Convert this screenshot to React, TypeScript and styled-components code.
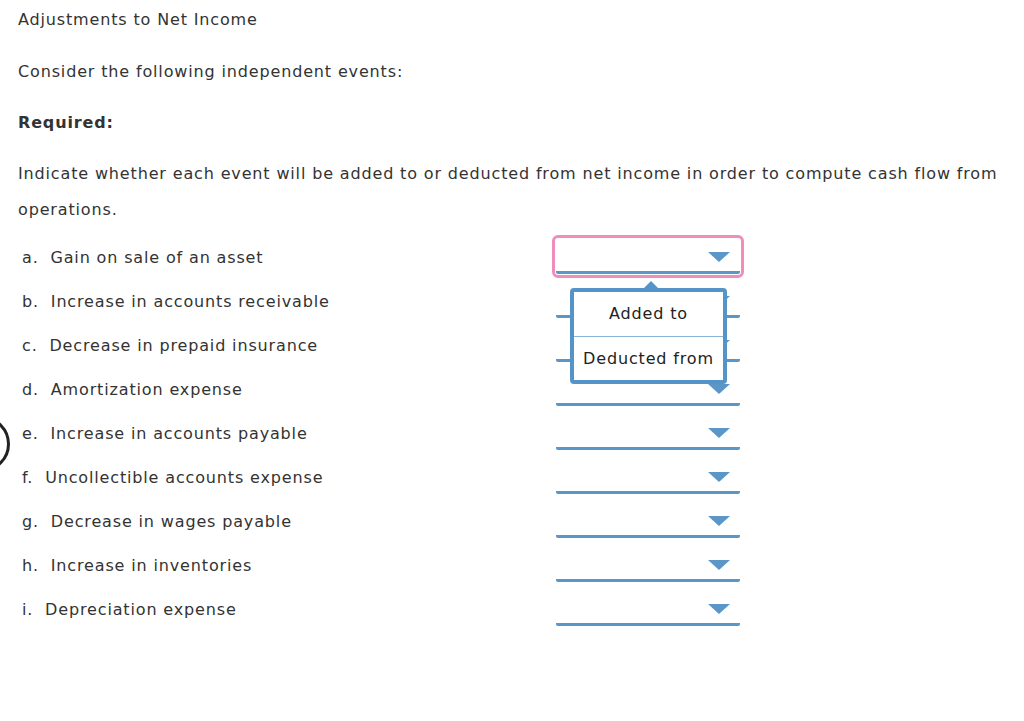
import styled, { createGlobalStyle } from "styled-components"

const GlobalStyle = createGlobalStyle`
  body {
    margin: 0;
    background: #fff;
    color: #333;
    font-family: Verdana, "DejaVu Sans", sans-serif;
    font-size: 16px;
    letter-spacing: 0.85px;
  }
`

const blue = "#5a96c7"

const Page = styled.div`
  position: relative;
  width: 1024px;
  height: 721px;
  padding: 2px 18px 0;
  box-sizing: border-box;
  overflow: hidden;
`

const Para = styled.p<{ $gap?: number; $bold?: boolean }>`
  margin: ${(p) => p.$gap ?? 0}px 0 0;
  line-height: 36px;
  font-weight: ${(p) => (p.$bold ? "bold" : "normal")};
  white-space: nowrap;
`

const List = styled.div`
  margin-top: 8px;
  display: flex;
  flex-direction: column;
`

const Row = styled.div`
  height: 44px;
  display: flex;
  align-items: flex-start;
`

const Label = styled.div`
  width: 538px;
  box-sizing: border-box;
  padding-left: 4px;
  line-height: 44px;
  white-space: pre;
`

const Select = styled.div<{ $focused?: boolean }>`
  position: relative;
  width: 174px;
  height: 32px;
  margin-top: 3px;
  padding-right: 10px;
  border-bottom: 3px solid ${blue};
  display: flex;
  align-items: center;
  justify-content: flex-end;
  outline: ${(p) => (p.$focused ? "3px solid #f18dbb" : "none")};
  outline-offset: 1px;
  border-radius: 2px;
`

const Caret = styled.div`
  width: 0;
  height: 0;
  margin-top: 3px;
  border-left: 11px solid transparent;
  border-right: 11px solid transparent;
  border-top: 10px solid ${blue};
`

const Menu = styled.div`
  position: absolute;
  left: 14px;
  top: 49px;
  width: 157px;
  height: 96px;
  box-sizing: border-box;
  border: 4px solid #5594c8;
  border-radius: 4px;
  background: #fff;
  display: flex;
  flex-direction: column;
  z-index: 2;

  &::before {
    content: "";
    position: absolute;
    left: 70px;
    top: -11px;
    border-left: 7px solid transparent;
    border-right: 7px solid transparent;
    border-bottom: 7px solid #5594c8;
  }
`

const Option = styled.div<{ $divider?: boolean }>`
  flex: 1;
  display: flex;
  align-items: center;
  justify-content: center;
  color: #222;
  white-space: nowrap;
  border-top: ${(p) => (p.$divider ? "1px solid #8ab4d8" : "none")};
`

const Ring = styled.div`
  position: absolute;
  left: -46px;
  top: 416px;
  width: 50px;
  height: 50px;
  border: 3px solid #222;
  border-radius: 50%;
`

const items = [
  "a.  Gain on sale of an asset",
  "b.  Increase in accounts receivable",
  "c.  Decrease in prepaid insurance",
  "d.  Amortization expense",
  "e.  Increase in accounts payable",
  "f.  Uncollectible accounts expense",
  "g.  Decrease in wages payable",
  "h.  Increase in inventories",
  "i.  Depreciation expense",
]

export default function App() {
  return (
    <Page>
      <GlobalStyle />
      <Para>Adjustments to Net Income</Para>
      <Para $gap={16}>Consider the following independent events:</Para>
      <Para $gap={15} $bold>Required:</Para>
      <Para $gap={15}>
        Indicate whether each event will be added to or deducted from net income in order to compute cash flow from
      </Para>
      <Para>operations.</Para>
      <List>
        {items.map((text, i) => (
          <Row key={i}>
            <Label>{text}</Label>
            <Select $focused={i === 0}>
              <Caret />
              {i === 0 && (
                <Menu>
                  <Option>Added to</Option>
                  <Option $divider>Deducted from</Option>
                </Menu>
              )}
            </Select>
          </Row>
        ))}
      </List>
      <Ring />
    </Page>
  )
}
